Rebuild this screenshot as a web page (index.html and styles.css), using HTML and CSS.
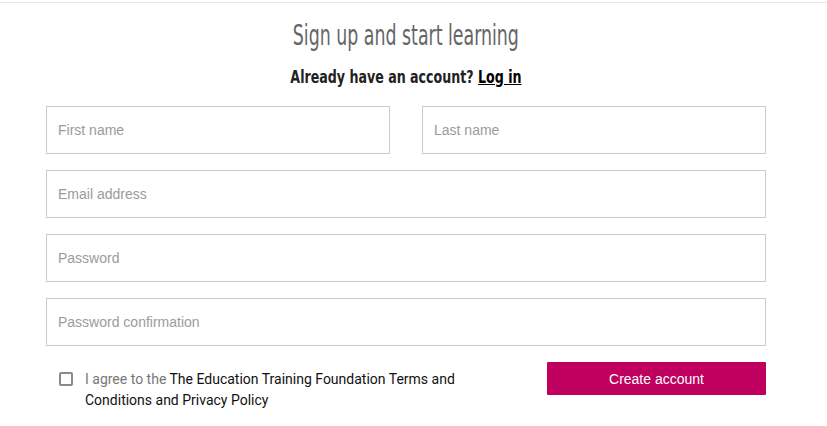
FILE: index.html
```html
<!DOCTYPE html>
<html>
<head>
<meta charset="utf-8">
<link rel="stylesheet" href="styles.css">
</head>
<body>
<div class="topline"></div>
<main class="page">
  <h1 class="title"><span class="squeeze-title">Sign up and start learning</span></h1>
  <p class="sub"><span class="squeeze-sub">Already have an account? <a href="#">Log in</a></span></p>
  <form class="form">
    <div class="row two">
      <input class="field" type="text" placeholder="First name">
      <input class="field" type="text" placeholder="Last name">
    </div>
    <input class="field" type="email" placeholder="Email address">
    <input class="field" type="password" placeholder="Password">
    <input class="field" type="password" placeholder="Password confirmation">
    <div class="bottom">
      <label class="agree">
        <span class="box"></span>
        <span class="agree-text"><span class="line"><span class="muted">I agree to the</span> <span class="terms">The Education Training Foundation Terms and</span></span><span class="line terms">Conditions and Privacy Policy</span></span>
      </label>
      <button type="button" class="btn">Create account</button>
    </div>
  </form>
</main>
</body>
</html>
```
FILE: styles.css
```css
html, body { margin: 0; padding: 0; background: #fff; }
body { font-family: "Liberation Sans", Arial, sans-serif; }
.topline { height: 2px; border-bottom: 1px solid #e6e6e6; }
.page { width: 720px; margin-left: 46px; }
.title {
  margin: 16px 0 0; text-align: center;
  font-family: "DejaVu Sans Condensed", "DejaVu Sans", sans-serif;
  font-stretch: condensed; font-weight: normal;
  font-size: 28px; line-height: 34px; color: #666;
}
.squeeze-title { display: inline-block; transform: scaleX(0.69); transform-origin: center; white-space: nowrap; }
.sub {
  margin: 14px 0 0; text-align: center;
  font-family: "DejaVu Sans Condensed", "DejaVu Sans", sans-serif;
  font-stretch: condensed; font-weight: bold;
  font-size: 17px; line-height: 20px; color: #222;
}
.squeeze-sub { display: inline-block; transform: scaleX(0.826); transform-origin: center; white-space: nowrap; }
.sub a { color: #000; text-decoration: underline; }
.form { margin-top: 19px; display: flex; flex-direction: column; gap: 16px; }
.row.two { display: grid; grid-template-columns: 1fr 1fr; gap: 32px; }
.field {
  display: block; width: 100%; box-sizing: border-box; height: 48px;
  border: 1px solid #cbcbcb; border-radius: 0; padding: 0 11px;
  font-family: "Liberation Sans", Arial, sans-serif; font-size: 14px; color: #333;
  background: #fff; outline: none;
}
.field::placeholder { color: #9b9b9b; }
.bottom { display: flex; justify-content: space-between; align-items: flex-start; }
.agree { display: flex; align-items: flex-start; gap: 12px; padding-left: 13px; padding-top: 7px; width: 410px;
  font-family: Roboto, "Liberation Sans", sans-serif; font-size: 14px; line-height: 21px; color: #111; }
.agree-text { display: flex; flex-direction: column; }
.line { display: block; white-space: nowrap; }
.box { flex: none; box-sizing: border-box; width: 14px; height: 14px; border: 2px solid #8a8a8e; border-radius: 2px; margin-top: 3px; }
.muted { color: #777; }
.btn {
  width: 219px; height: 33px; border: 0; border-radius: 1px; background: #c0005f; color: #fff;
  font-family: "Liberation Sans", Arial, sans-serif; font-size: 14px; cursor: pointer;
}
```
